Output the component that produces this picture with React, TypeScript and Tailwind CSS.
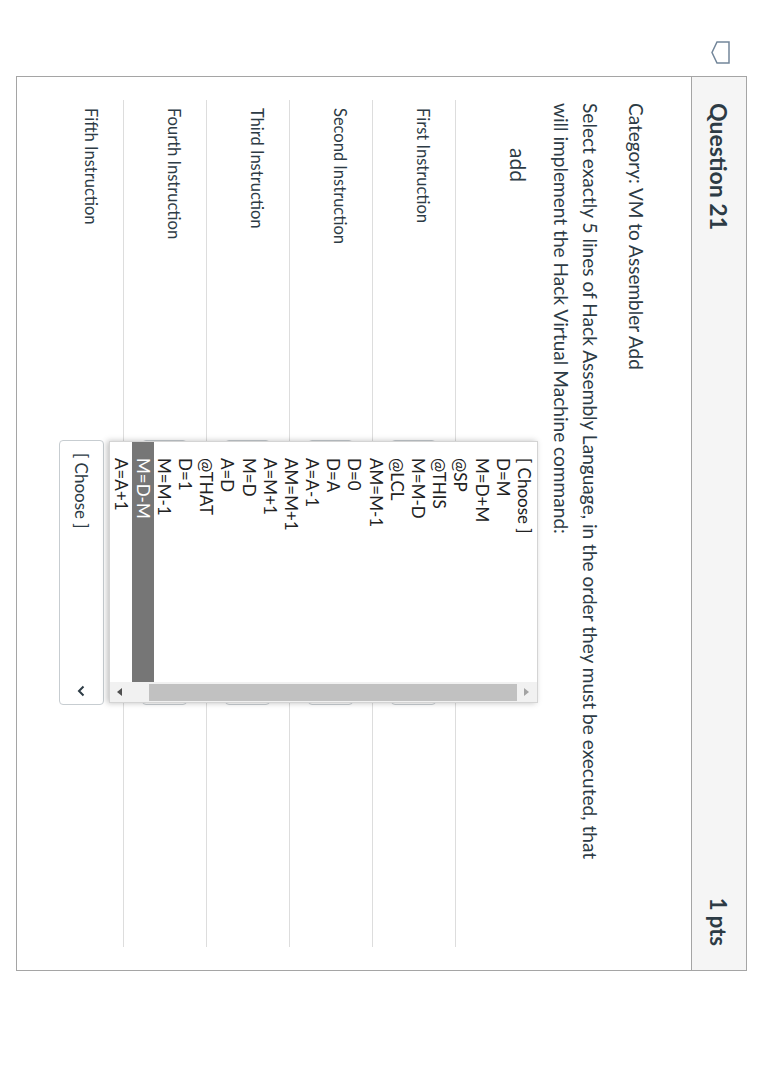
const options = [
  '[ Choose ]',
  'D=M',
  'M=D+M',
  '@SP',
  '@THIS',
  'M=M-D',
  '@LCL',
  'AM=M-1',
  'D=0',
  'D=A',
  'A=A-1',
  'AM=M+1',
  'A=M+1',
  'M=D',
  'A=D',
  '@THAT',
  'D=1',
  'M=M-1',
  'M=D-M',
  'A=A+1',
];

const rows = [
  'First Instruction',
  'Second Instruction',
  'Third Instruction',
  'Fourth Instruction',
  'Fifth Instruction',
];

function Bookmark() {
  return (
    <svg width="23" height="19" viewBox="0 0 23 19" fill="none">
      <path d="M1 1 H22 V13 L11.5 18 L1 13 Z" stroke="#73869a" strokeWidth="1.5" fill="#fff" />
    </svg>
  );
}

function Chevron() {
  return (
    <svg width="12" height="8" viewBox="0 0 12 8" fill="none">
      <path d="M1.5 1.5 L6 6 L10.5 1.5" stroke="#2d3b45" strokeWidth="2" />
    </svg>
  );
}

function Select() {
  return (
    <div className="w-[265px] h-[45px] rounded-[4px] border border-[#c7cdd1] bg-white flex items-center justify-between pl-[12px] pr-[7px]">
      <span className="text-[17px] text-[#2d3b45]">[ Choose ]</span>
      <Chevron />
    </div>
  );
}

function Popup() {
  return (
    <div className="absolute left-[441px] top-[222px] w-[262px] h-[429px] bg-white border border-[#d4d4d4] shadow-[0_2px_6px_rgba(0,0,0,0.25)] flex">
      <div className="flex-1 pt-[2px]">
        {options.map((o) => (
          <div
            key={o}
            className={
              o === 'M=D-M'
                ? 'h-[21.2px] leading-[21.2px] pl-[16px] text-[17px] bg-[#767676] text-white'
                : 'h-[21.2px] leading-[21.2px] pl-[16px] text-[17px] text-[#222]'
            }
          >
            {o}
          </div>
        ))}
      </div>
      {/* scrollbar */}
      <div className="w-[20px] bg-[#f1f1f1] flex flex-col items-center">
        <div className="h-[20px] flex items-center justify-center">
          <svg width="8" height="5" viewBox="0 0 8 5">
            <path d="M0 5 L4 0 L8 5 Z" fill="#a3a3a3" />
          </svg>
        </div>
        <div className="w-[17px] h-[368px] bg-[#c1c1c1]" />
        <div className="flex-1" />
        <div className="h-[20px] flex items-center justify-center">
          <svg width="8" height="5" viewBox="0 0 8 5">
            <path d="M0 0 L4 5 L8 0 Z" fill="#505050" />
          </svg>
        </div>
      </div>
    </div>
  );
}

export default function App() {
  return (
    <div className="w-[760px] h-[1067px] overflow-hidden bg-white">
      <div className="relative w-[1067px] h-[760px] origin-top-left translate-x-[760px] rotate-90 flex items-start font-['Lato',sans-serif] text-[#2d3b45]">
        <div className="w-[76px] pt-[30px] pl-[41px]">
          <Bookmark />
        </div>

        <div className="mt-[13px] w-[895px] h-[731px] border border-[#a5a5a5]">
          {/* Header */}
          <div className="h-[55px] bg-[#f5f5f5] border-b border-[#a5a5a5] flex items-center justify-between pl-[26px] pr-[24px]">
            <span className="text-[23px] font-bold">Question 21</span>
            <span className="text-[22px] font-bold">1 pts</span>
          </div>

          {/* Body */}
          <div className="px-[23px] pt-[43px]">
            <div className="px-[3px]">
              <p className="text-[19px] leading-[24px]">Category: VM to Assembler Add</p>
              <p className="mt-[19px] text-[19.1px] leading-[29px] whitespace-nowrap">
                Select exactly 5 lines of Hack Assembly Language, in the order they must be executed, that
                <br />
                will implement the Hack Virtual Machine command:
              </p>
              <p className="mt-[16px] ml-[45px] text-[21px] leading-[26px]">add</p>
            </div>

            <div className="mt-[49px]">
              {rows.map((r) => (
                <div key={r} className="h-[83px] border-t border-[#dddddd] flex items-start pt-[19px] pl-[8px]">
                  <div className="w-[332px] pt-[3px] text-[16.5px] leading-[20px]">{r}</div>
                  <Select />
                </div>
              ))}
            </div>
          </div>
        </div>

        <Popup />
      </div>
    </div>
  );
}
